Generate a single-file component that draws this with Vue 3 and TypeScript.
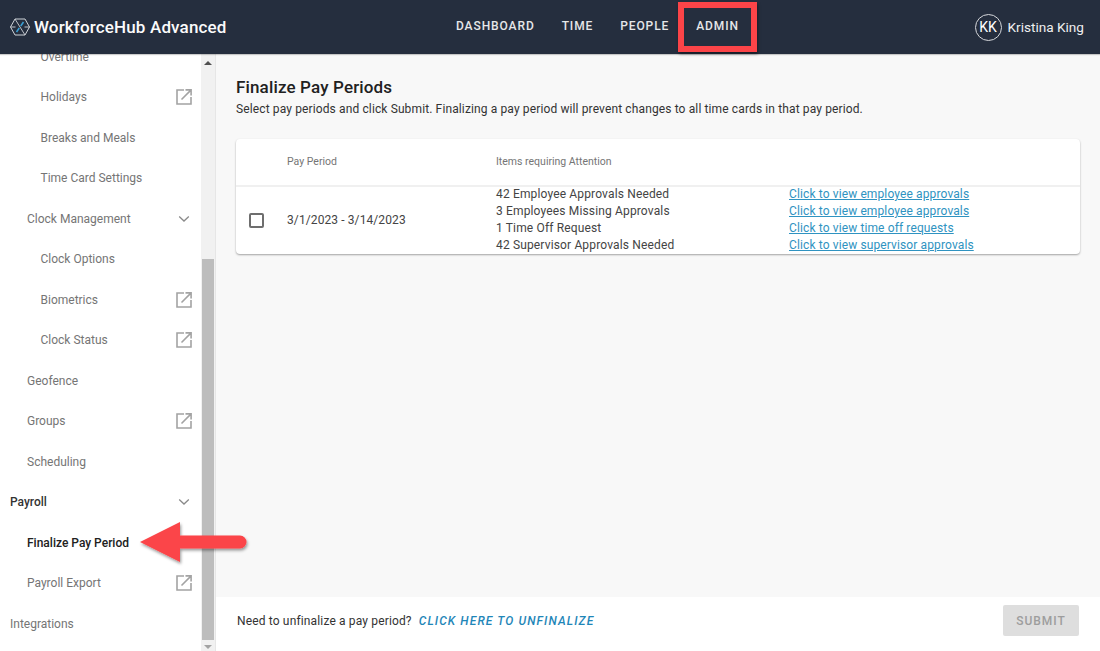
<script setup lang="ts">
interface NavRow { label: string; level: 0 | 1 | 2; ext?: boolean; chevron?: boolean; strong?: boolean; active?: boolean }
const rows: NavRow[] = [
  { label: 'Overtime', level: 2 },
  { label: 'Holidays', level: 2, ext: true },
  { label: 'Breaks and Meals', level: 2 },
  { label: 'Time Card Settings', level: 2 },
  { label: 'Clock Management', level: 1, chevron: true },
  { label: 'Clock Options', level: 2 },
  { label: 'Biometrics', level: 2, ext: true },
  { label: 'Clock Status', level: 2, ext: true },
  { label: 'Geofence', level: 1 },
  { label: 'Groups', level: 1, ext: true },
  { label: 'Scheduling', level: 1 },
  { label: 'Payroll', level: 0, chevron: true, strong: true },
  { label: 'Finalize Pay Period', level: 1, active: true },
  { label: 'Payroll Export', level: 1, ext: true },
  { label: 'Integrations', level: 0 },
]
const tabs = ['DASHBOARD', 'TIME', 'PEOPLE', 'ADMIN']
const items = [
  ['42 Employee Approvals Needed', 'Click to view employee approvals'],
  ['3 Employees Missing Approvals', 'Click to view employee approvals'],
  ['1 Time Off Request', 'Click to view time off requests'],
  ['42 Supervisor Approvals Needed', 'Click to view supervisor approvals'],
]
</script>

<template>
  <div class="page">
    <header class="topbar">
      <div class="brand">
        <svg class="logo" viewBox="0 0 20 18" width="20" height="18" fill="none">
          <path d="M5 1H15L19.5 9L15 17H5L.5 9Z" stroke="#cfd3d8" stroke-width="1" />
          <path d="M5 1L15 17M.5 9H5.5M14.5 9H19.5" stroke="#cfd3d8" stroke-width=".9" />
          <path d="M6.5 14L9.3 10M10.7 8L13.5 4" stroke="#3aa0d5" stroke-width="1.5" />
        </svg>
        <span class="brand-name">WorkforceHub Advanced</span>
      </div>
      <nav class="tabs">
        <a v-for="t in tabs" :key="t" class="tab">{{ t }}</a>
      </nav>
      <div class="user">
        <span class="avatar">KK</span>
        <span class="user-name">Kristina King</span>
      </div>
    </header>

    <div class="body">
      <aside class="sidebar">
        <ul class="nav">
          <li
            v-for="r in rows"
            :key="r.label"
            class="nav-row"
            :class="['lvl' + r.level, { strong: r.strong, active: r.active }]"
          >
            <span>{{ r.label }}</span>
            <svg v-if="r.ext" class="ext" viewBox="0 0 16 16" width="16" height="16" fill="none">
              <path d="M8 1H1V15H15V8" stroke="#a3a3a3" stroke-width="1.6" />
              <path d="M5.5 10.5L14.6 1.4M9.5 .9H15.1V6.5" stroke="#a3a3a3" stroke-width="1.6" />
            </svg>
            <svg v-if="r.chevron" class="chev" viewBox="0 0 12 8" width="12" height="8" fill="none">
              <path d="M1.2 1.5L6 6L10.8 1.5" stroke="#8a8a8a" stroke-width="1.3" />
            </svg>
          </li>
        </ul>
      </aside>
      <div class="scroll">
        <span class="arrow up"></span>
        <span class="spacer"></span>
        <span class="thumb"></span>
        <span class="arrow down"></span>
      </div>

      <main class="main">
        <section class="content">
          <h1 class="title">Finalize Pay Periods</h1>
          <p class="subtitle">Select pay periods and click Submit. Finalizing a pay period will prevent changes to all time cards in that pay period.</p>
          <div class="card">
            <div class="card-head">
              <span class="col-period">Pay Period</span>
              <span>Items requiring Attention</span>
            </div>
            <div class="card-row">
              <span class="check"></span>
              <span class="col-period date">3/1/2023 - 3/14/2023</span>
              <div class="items">
                <template v-for="it in items" :key="it[0]">
                  <span>{{ it[0] }}</span>
                  <a class="link">{{ it[1] }}</a>
                </template>
              </div>
            </div>
          </div>
        </section>
        <footer class="footer">
          <span class="need">Need to unfinalize a pay period?</span>
          <a class="unfinalize">CLICK HERE TO UNFINALIZE</a>
          <button class="submit" disabled>SUBMIT</button>
        </footer>
      </main>
    </div>

    <div class="mark-box"></div>
    <svg class="mark-arrow" viewBox="0 0 120 52" width="120" height="52">
      <defs>
        <filter id="arrow-shadow" x="-10%" y="-20%" width="120%" height="150%">
          <feDropShadow dx="1" dy="2" stdDeviation="1.6" flood-color="#000" flood-opacity="0.4" />
        </filter>
      </defs>
      <path
        d="M2 21L42 1V14.5H102A6.5 6.5 0 0 1 102 27.5H42V41Z"
        fill="#fb4448"
        filter="url(#arrow-shadow)"
      />
    </svg>
  </div>
</template>

<style>
html, body { margin: 0; padding: 0; }
</style>

<style scoped>
.page {
  position: relative;
  width: 1100px;
  height: 651px;
  overflow: hidden;
  display: flex;
  flex-direction: column;
  font-family: Roboto, "Liberation Sans", sans-serif;
  background: #f8f8f8;
  color: #2b2b2b;
}
.topbar {
  height: 54px;
  flex: none;
  display: flex;
  align-items: center;
  background: #252e3e;
  color: #fff;
  position: relative;
  z-index: 2;
  box-shadow: 0 1px 1px rgba(0, 0, 0, 0.2);
}
.brand { display: flex; align-items: center; width: 447px; padding-left: 10px; box-sizing: border-box; }
.logo { flex: none; margin-right: 4px; }
.brand-name { font-size: 17px; font-weight: 500; letter-spacing: 0.15px; color: #fbfbfb; white-space: nowrap; }
.tabs { display: flex; flex: 1; padding-bottom: 2px; }
.tab {
  padding: 0 9px;
  margin-right: 9px;
  font-size: 12px;
  font-weight: 500;
  letter-spacing: 0.9px;
  color: #e6e7e9;
}
.user { display: flex; align-items: center; padding-right: 16px; }
.avatar {
  width: 27px;
  height: 27px;
  box-sizing: border-box;
  border: 1px solid #d5d7db;
  border-radius: 50%;
  display: flex;
  align-items: center;
  justify-content: center;
  font-size: 14px;
  color: #fff;
  margin-right: 6px;
}
.user-name { font-size: 13.6px; color: #f0f0f0; white-space: nowrap; }

.body { flex: 1; display: flex; min-height: 0; }
.sidebar { width: 201px; flex: none; background: #fff; overflow: hidden; }
.nav { list-style: none; margin: -17.3px 0 0; padding: 0; }
.nav-row {
  height: 40.5px;
  display: flex;
  align-items: center;
  justify-content: space-between;
  box-sizing: border-box;
  padding-right: 9px;
  font-size: 12px;
  color: #757575;
}
.lvl0 { padding-left: 10px; }
.lvl1 { padding-left: 27px; }
.lvl2 { padding-left: 40.5px; }
.strong { color: #333; font-weight: 500; }
.active { color: #212121; font-weight: 500; }
.chev { margin-right: 2px; }
.scroll {
  width: 14px;
  flex: none;
  background: #f1f1f1;
  display: flex;
  flex-direction: column;
  align-items: center;
  border-right: 1px solid #e6e6e6;
}
.spacer { flex: 1; }
.arrow { width: 0; height: 0; border-left: 4px solid transparent; border-right: 4px solid transparent; flex: none; }
.up { border-bottom: 4px solid #505050; margin-top: 7px; }
.down { border-top: 4px solid #a3a3a3; margin: 5px 0 2px; }
.thumb { width: 12px; height: 381px; background: #bdbdbd; flex: none; }

.main { flex: 1; min-width: 0; display: flex; flex-direction: column; }
.content { flex: 1; padding: 22px 20px 0; min-height: 0; }
.title { margin: 0; font-size: 17px; letter-spacing: 0.15px; line-height: 22px; font-weight: 500; color: #212121; }
.subtitle { margin: 1px 0 0; font-size: 12px; line-height: 20px; color: #333; letter-spacing: 0.125px; white-space: nowrap; }
.card {
  margin-top: 19.5px;
  background: #fff;
  border-radius: 4px;
  box-shadow: 0 1px 2px rgba(0, 0, 0, 0.35);
}
.card-head {
  height: 46px;
  display: flex;
  align-items: center;
  font-size: 10.5px;
  font-weight: 400;
  color: #757575;
  border-bottom: 2px solid #f0f0f0;
  box-sizing: content-box;
}
.col-period { margin-left: 51px; width: 209px; flex: none; }
.card-row { height: 67px; display: flex; align-items: center; font-size: 12px; color: #444; letter-spacing: 0.15px; position: relative; }
.check {
  position: absolute;
  left: 13px;
  top: 26.5px;
  width: 11px;
  height: 11px;
  border: 2px solid #6e6e6e;
  border-radius: 2px;
}
.date { font-size: 12px; letter-spacing: 0.1px; }
.items {
  display: grid;
  grid-template-columns: 293px auto;
  grid-auto-rows: 16.8px;
  line-height: 16.8px;
}
.link { color: #2f93c1; text-decoration: underline; letter-spacing: 0.12px; }
.footer {
  height: 54px;
  flex: none;
  background: #fff;
  display: flex;
  align-items: center;
  padding: 0 21px 7px;
  box-sizing: border-box;
  font-size: 12px;
  letter-spacing: 0.15px;
  color: #333;
}
.need { position: relative; }
.unfinalize {
  margin-left: 7px;
  font-size: 12px;
  font-style: italic;
  font-weight: 500;
  letter-spacing: 1.1px;
  color: #1f86b8;
  flex: 1;
}
.submit {
  width: 76px;
  height: 31px;
  border: 0;
  border-radius: 2px;
  background: #dedede;
  color: #9d9d9d;
  font: 500 12px Roboto, sans-serif;
  letter-spacing: 1px;
  padding: 0;
}
.mark-box {
  position: absolute;
  left: 677.5px;
  top: 2px;
  width: 67px;
  height: 38px;
  border: 6.5px solid #fb4448;
  box-shadow: 1px 2px 3px rgba(0, 0, 0, 0.4);
  z-index: 3;
}
.mark-arrow { position: absolute; left: 138px; top: 521px; z-index: 3; }
</style>
